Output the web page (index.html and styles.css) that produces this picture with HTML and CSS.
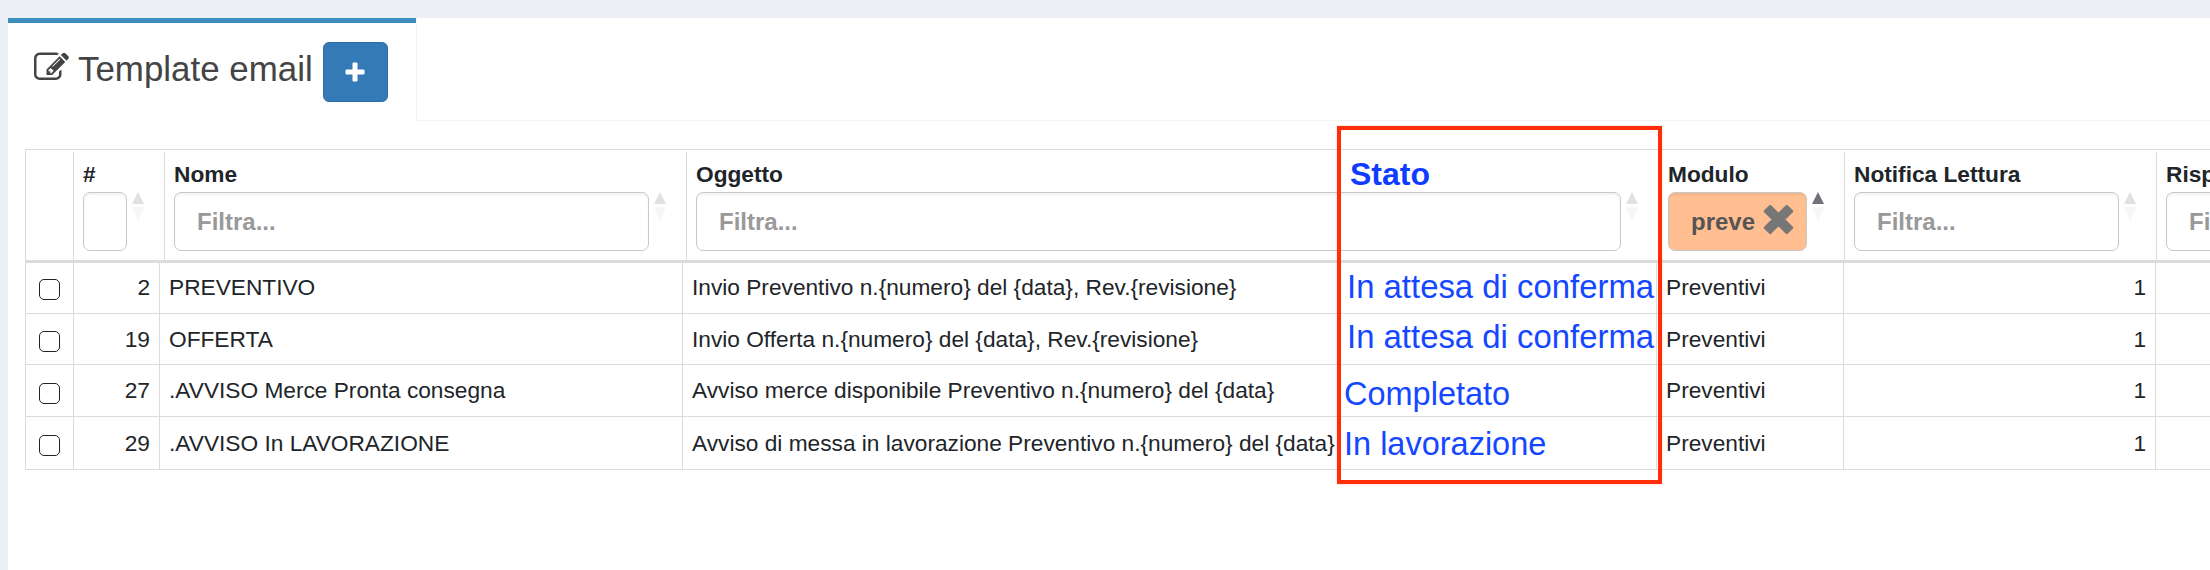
FILE: index.html
```html
<!DOCTYPE html>
<html lang="it">
<head>
<meta charset="utf-8">
<title>Template email</title>
<link rel="stylesheet" href="styles.css">
</head>
<body>
<main class="panel">
  <div class="tabs">
    <div class="tab">
      <svg class="tab-icon" viewBox="0 0 1792 1792" aria-hidden="true"><path d="M888 1184l116-116-152-152-116 116v56h96v96h56zm440-720q-16-16-33 1l-350 350q-17 17-1 33t33-1l350-350q17-17 1-33zm80 594v190q0 119-84.5 203.5t-203.5 84.5h-832q-119 0-203.5-84.5t-84.5-203.5v-832q0-119 84.5-203.5t203.5-84.5h832q63 0 117 25 15 7 18 23 3 17-9 29l-49 49q-14 14-32 8-23-6-45-6h-832q-66 0-113 47t-47 113v832q0 66 47 113t113 47h832q66 0 113-47t47-113v-126q0-13 9-22l64-64q15-15 35-7t20 29zm-96-738l288 288-672 672h-288v-288zm444 132l-92 92-288-288 92-92q28-28 68-28t68 28l152 152q28 28 28 68t-28 68z"/></svg>
      <span class="tab-title">Template email</span>
      <button class="add-btn" type="button" aria-label="Aggiungi">
        <svg viewBox="0 0 20 20" aria-hidden="true"><path d="M7.500 1.500a1 1 0 0 1 1-1h3a1 1 0 0 1 1 1v6h6a1 1 0 0 1 1 1v3a1 1 0 0 1-1 1h-6v6a1 1 0 0 1-1 1h-3a1 1 0 0 1-1-1v-6h-6a1 1 0 0 1-1-1v-3a1 1 0 0 1 1-1h6z"/></svg>
      </button>
    </div>
    <div class="tabs-rest"></div>
  </div>

  <div class="table">
    <div class="thead">
      <div class="th"></div>
      <div class="th">
        <div class="th-label">#</div>
        <div class="filter"><input class="field" type="text" aria-label="#"><span class="sort"><i class="up"></i><i class="down"></i></span></div>
      </div>
      <div class="th">
        <div class="th-label">Nome</div>
        <div class="filter"><input class="field" type="text" placeholder="Filtra..."><span class="sort"><i class="up"></i><i class="down"></i></span></div>
      </div>
      <div class="th">
        <div class="th-label">Oggetto</div>
        <div class="filter"><input class="field" type="text" placeholder="Filtra..."><span class="sort"><i class="up"></i><i class="down"></i></span></div>
      </div>
      <div class="th">
        <div class="th-label">Modulo</div>
        <div class="filter">
          <span class="field-wrap">
            <input class="field field-active" type="text" value="preve" aria-label="Modulo">
            <svg class="clear" viewBox="0 0 30 30" aria-hidden="true"><path d="M7 2 15 10 23 2 28 7 20 15 28 23 23 28 15 20 7 28 2 23 10 15 2 7z"/></svg>
          </span>
          <span class="sort"><i class="up up-active"></i><i class="down"></i></span>
        </div>
      </div>
      <div class="th">
        <div class="th-label">Notifica Lettura</div>
        <div class="filter"><input class="field" type="text" placeholder="Filtra..."><span class="sort"><i class="up"></i><i class="down"></i></span></div>
      </div>
      <div class="th th-last">
        <div class="th-label">Risposta</div>
        <div class="filter"><input class="field" type="text" placeholder="Filtra..."><span class="sort"><i class="up"></i><i class="down"></i></span></div>
      </div>
    </div>

    <div class="tbody">
      <div class="td td-check"><input class="check" type="checkbox"></div>
      <div class="td td-num">2</div>
      <div class="td">PREVENTIVO</div>
      <div class="td">Invio Preventivo n.{numero} del {data}, Rev.{revisione}</div>
      <div class="td">Preventivi</div>
      <div class="td td-num">1</div>
      <div class="td td-last"></div>

      <div class="td td-check"><input class="check" type="checkbox"></div>
      <div class="td td-num">19</div>
      <div class="td">OFFERTA</div>
      <div class="td">Invio Offerta n.{numero} del {data}, Rev.{revisione}</div>
      <div class="td">Preventivi</div>
      <div class="td td-num">1</div>
      <div class="td td-last"></div>

      <div class="td td-check"><input class="check" type="checkbox"></div>
      <div class="td td-num">27</div>
      <div class="td">.AVVISO Merce Pronta consegna</div>
      <div class="td">Avviso merce disponibile Preventivo n.{numero} del {data}</div>
      <div class="td">Preventivi</div>
      <div class="td td-num">1</div>
      <div class="td td-last"></div>

      <div class="td td-check"><input class="check" type="checkbox"></div>
      <div class="td td-num">29</div>
      <div class="td">.AVVISO In LAVORAZIONE</div>
      <div class="td">Avviso di messa in lavorazione Preventivo n.{numero} del {data}</div>
      <div class="td">Preventivi</div>
      <div class="td td-num">1</div>
      <div class="td td-last"></div>
    </div>
  </div>
</main>

<aside class="callout">
  <div class="callout-title">Stato</div>
  <div class="status status-1">In attesa di conferma</div>
  <div class="status status-2">In attesa di conferma</div>
  <div class="status status-3">Completato</div>
  <div class="status status-4">In lavorazione</div>
</aside>
</body>
</html>
```

FILE: styles.css
```css
* { box-sizing: border-box; }

html, body {
  height: 100%;
}

body {
  margin: 0;
  padding: 18px 0 0 8px;
  background: #ecf0f5;
  color: #212529;
  font-family: "Liberation Sans", Arial, sans-serif;
  overflow: hidden;
  position: relative;
}

.panel {
  height: 552px;
  background: #fff;
  overflow: hidden;
}

/* tab strip */
.tabs {
  display: flex;
  height: 103px;
}

.tab {
  flex: none;
  width: 408px;
  border-top: 5px solid #3c8dbc;
  display: flex;
  align-items: center;
  padding-left: 26px;
}

.tab-icon {
  flex: none;
  width: 35px;
  height: 35px;
  fill: #444;
  margin-bottom: 10px;
}

.tab-title {
  margin: 0 10px 6px 9px;
  font-size: 34.9px;
  line-height: 42px;
  color: #444;
  white-space: nowrap;
}

.add-btn {
  flex: none;
  width: 65px;
  height: 60px;
  padding: 0;
  background: #337ab7;
  border: 1px solid #2e6da4;
  border-radius: 6px;
  display: flex;
  align-items: center;
  justify-content: center;
}

.add-btn svg {
  width: 20px;
  height: 20px;
  fill: #fff;
}

.tabs-rest {
  flex: 1;
  border-left: 1px solid #f4f4f4;
  border-bottom: 1px solid #f4f4f4;
}

/* table */
.table {
  width: 2500px;
  margin: 28px 0 0 17px;
  border-top: 1px solid #dcdcdc;
  border-left: 1px solid #dcdcdc;
  border-bottom: 1px solid #dcdcdc;
  font-size: 22.7px;
}

.thead {
  display: grid;
  grid-template-columns: 48px 91px 522px 972px 186px 312px 300px;
  height: 113px;
  padding-top: 2px;
  border-bottom: 3px solid #dcdcdc;
}

.th {
  min-width: 0;
  padding: 0 20px 0 9px;
  border-right: 1px solid #dcdcdc;
}

.th-label {
  height: 40px;
  line-height: 45px;
  font-weight: 700;
  white-space: nowrap;
}

.filter {
  display: flex;
  gap: 5px;
}

.field-wrap {
  position: relative;
  flex: 1;
  min-width: 0;
  display: flex;
}

.field {
  flex: 1;
  min-width: 0;
  width: 100%;
  height: 59px;
  padding: 0 8px 0 22px;
  border: 1px solid #c8c8c8;
  border-radius: 7px;
  background: #fff;
  box-shadow: inset 0 2px 2px rgba(0, 0, 0, .05);
  font: 700 24px "Liberation Sans", Arial, sans-serif;
  color: #555;
  outline: none;
}

.field::placeholder {
  color: #999;
  opacity: 1;
}

.field-active {
  background: #ffbf91;
}

.clear {
  position: absolute;
  top: 12px;
  right: 13px;
  width: 31px;
  height: 31px;
  fill: #777;
  stroke: #777;
  stroke-width: 2.5;
  stroke-linejoin: round;
}

.sort {
  flex: none;
  width: 12px;
  display: flex;
  flex-direction: column;
  gap: 3px;
}

.sort i {
  display: block;
  width: 0;
  height: 0;
  border-left: 6px solid transparent;
  border-right: 6px solid transparent;
}

.up {
  border-bottom: 12px solid #e1e1e1;
}

.up-active {
  border-bottom-color: #6f7379;
}

.down {
  border-top: 14px solid #f6f6f6;
}

.tbody {
  display: grid;
  grid-template-columns: 48px 86px 523px 974px 187px 312px 300px;
  grid-template-rows: 51px 51px 52px 52px;
}

.td {
  min-width: 0;
  display: flex;
  align-items: center;
  padding: 0 9px;
  white-space: nowrap;
  border-right: 1px solid #dcdcdc;
  border-bottom: 1px solid #dcdcdc;
}

.tbody .td:nth-child(-n+7) {
  padding-bottom: 2px;
}

.tbody .td:nth-last-child(-n+7) {
  border-bottom: 0;
}

.tbody .td-check {
  justify-content: center;
  padding: 5px 0 0;
}

.td-num {
  justify-content: flex-end;
}

.check {
  appearance: none;
  width: 21px;
  height: 21px;
  margin: 0;
  border: 1px solid #222;
  border-radius: 5px;
  background: #fff;
}

/* annotation drawn over the screenshot */
.callout {
  position: absolute;
  left: 1337px;
  top: 126px;
  width: 325px;
  height: 358px;
  padding: 24px 0 0;
  border: 4px solid #ff2d08;
  box-shadow: 0 0 2px rgba(255, 45, 8, .25);
  color: #1447ff;
}

.callout-title {
  margin-left: 9px;
  font-size: 32px;
  line-height: 40px;
  font-weight: 700;
  color: #0f3cff;
}

.status {
  line-height: 40px;
  white-space: nowrap;
}

.status-1 {
  margin: 73px 0 0 6px;
  font-size: 32.9px;
}

.status-2 {
  margin: 10px 0 0 6px;
  font-size: 32.9px;
}

.status-3 {
  margin: 17px 0 0 3px;
  font-size: 32.5px;
}

.status-4 {
  margin: 10px 0 0 3px;
  font-size: 32.5px;
}
```
